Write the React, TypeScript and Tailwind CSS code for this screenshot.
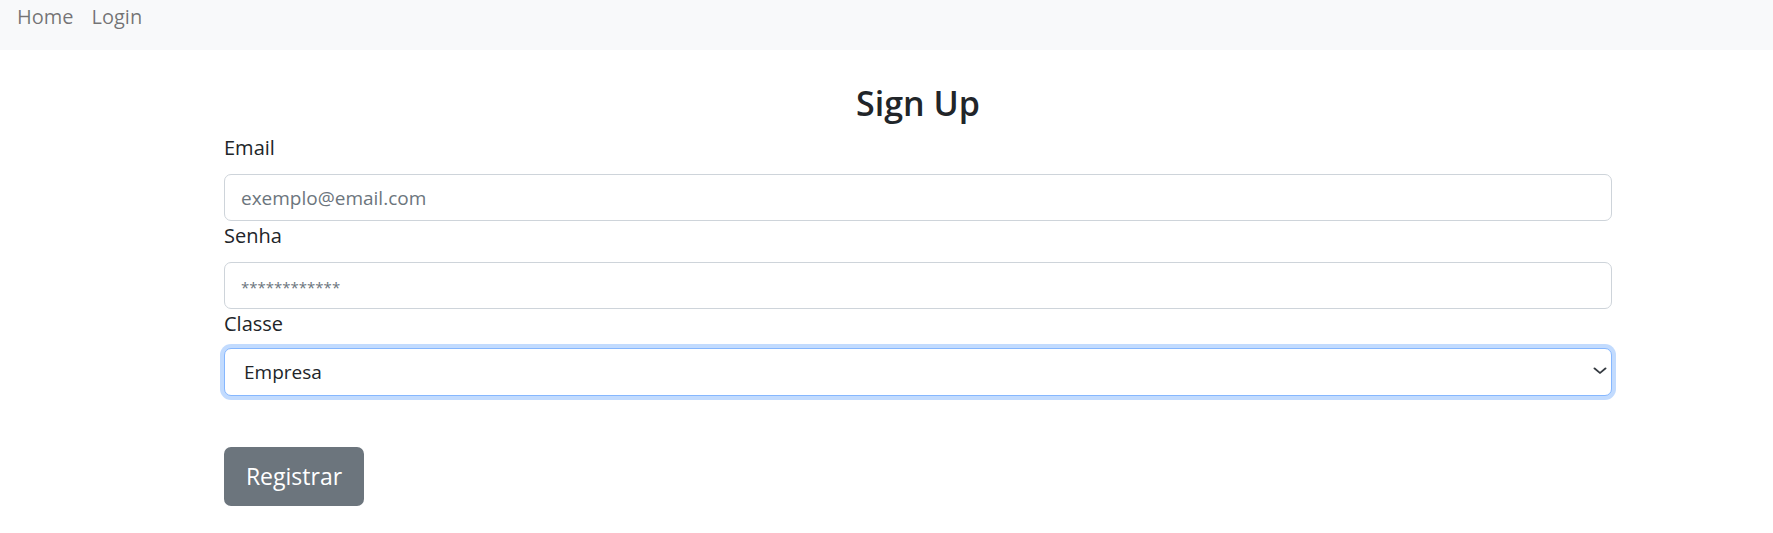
import { useState } from "react";

function Field({ label, gap = "mb-[11px]", children }: { label: string; gap?: string; children: React.ReactNode }) {
    return (
        <div className="flex flex-col">
            <label className={`${gap} text-[20px] leading-[30px] text-[#212529]`}>{label}</label>
            {children}
        </div>
    );
}

export default function App() {
    const [classe, setClasse] = useState("Empresa");

    return (
        <div className="min-h-screen bg-white font-['Open_Sans',sans-serif]">
            <nav className="flex h-[50px] items-start gap-[18px] bg-[#f8f9fa] pl-[17px] pt-[2px]">
                <a href="#" className="text-[20px] leading-[30px] text-black/55">Home</a>
                <a href="#" className="text-[20px] leading-[30px] text-black/55">Login</a>
            </nav>

            <div className="ml-[224px] flex w-[1388px] flex-col">
                <h2 className="mt-[34px] mb-[11px] text-center text-[34px] leading-[38px] font-semibold text-[#212529]">Sign Up</h2>

                <Field label="Email">
                    <input
                        type="email"
                        placeholder="exemplo@email.com"
                        className="h-[47px] rounded-[7px] border border-[#ced4da] px-4 text-[19px] text-[#212529] outline-none placeholder:text-[#6c757d]"
                    />
                </Field>

                <Field label="Senha">
                    <input
                        type="password"
                        placeholder="************"
                        className="h-[47px] rounded-[7px] border border-[#ced4da] px-4 text-[19px] text-[#212529] outline-none placeholder:text-[15px] placeholder:text-[#6c757d]"
                    />
                </Field>

                <Field label="Classe" gap="mb-[9px]">
                    <div className="relative">
                        <select
                            value={classe}
                            onChange={(e) => setClasse(e.target.value)}
                            className="h-[48px] w-full appearance-none rounded-[7px] border border-[#86b7fe] bg-white pl-[19px] text-[19px] text-[#212529] shadow-[0_0_0_4px_rgba(13,110,253,0.25)] outline-none"
                        >
                            <option>Empresa</option>
                            <option>Pessoa</option>
                        </select>
                        <svg className="pointer-events-none absolute right-[4px] top-[18px]" width="16" height="12" viewBox="0 0 16 12">
                            <path d="m2.5 4.5 5.5 5.5 5.5-5.5" fill="none" stroke="#343a40" strokeWidth="2" strokeLinecap="round" strokeLinejoin="round" transform="translate(0 -1.5) scale(1 0.85)" />
                        </svg>
                    </div>
                </Field>

                <div className="mt-[51px]">
                    <button className="flex h-[59px] w-[140px] items-center justify-center rounded-[7px] bg-[#6c757d] text-[23px] text-white">Registrar</button>
                </div>
            </div>
        </div>
    );
}
